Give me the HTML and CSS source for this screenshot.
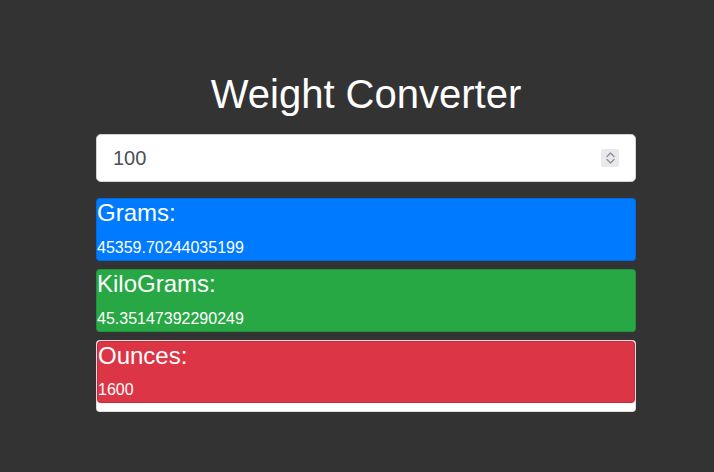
FILE: index.html
```html
<!DOCTYPE html>
<html lang="en">
<head>
<meta charset="utf-8">
<title>Weight Converter</title>
<link rel="stylesheet" href="styles.css">
</head>
<body>
<main class="converter">
  <h1 class="title">Weight Converter</h1>
  <div class="field">
    <input class="field-input" type="text" value="100" aria-label="Pounds">
    <span class="spinner" aria-hidden="true">
      <svg width="11" height="14" viewBox="0 0 11 14"><path d="M2 5.5 L5.5 2 L9 5.5 M2 8.5 L5.5 12 L9 8.5" fill="none" stroke="#8e8e96" stroke-width="1.4" stroke-linecap="round" stroke-linejoin="round"/></svg>
    </span>
  </div>
  <div class="output">
    <div class="card card-blue">
      <h4 class="card-label">Grams:</h4>
      <div class="card-value">45359.70244035199</div>
    </div>
    <div class="card card-green">
      <h4 class="card-label">KiloGrams:</h4>
      <div class="card-value">45.35147392290249</div>
    </div>
    <div class="card-outer">
      <div class="card card-red">
        <h4 class="card-label">Ounces:</h4>
        <div class="card-value">1600</div>
      </div>
    </div>
  </div>
</main>
</body>
</html>
```
FILE: styles.css
```css
* { box-sizing: border-box; }
html, body { margin: 0; padding: 0; }
body {
  background: #333333;
  font-family: "Liberation Sans", Arial, sans-serif;
  color: #fff;
  padding: 70px 0 0 18px;
  min-height: 472px;
}
.converter {
  width: 540px;
  margin: 0 auto;
}
.title {
  margin: 0 0 16px;
  font-size: 40px;
  font-weight: 400;
  line-height: 1.2;
  text-align: center;
  color: #fff;
}
.field {
  display: flex;
  align-items: center;
  height: 48px;
  background: #fff;
  border: 1px solid #ced4da;
  border-radius: 4.8px;
  padding: 0 16px 0 16px;
  margin-bottom: 16px;
}
.field-input {
  flex: 1;
  min-width: 0;
  border: none;
  outline: none;
  background: transparent;
  padding: 0;
  font-family: inherit;
  font-size: 20px;
  color: #495057;
}
.spinner {
  display: flex;
  align-items: center;
  justify-content: center;
  width: 18px;
  height: 18px;
  background: #e9e9ed;
  border-radius: 2px;
}
.output {
  display: flex;
  flex-direction: column;
  gap: 8px;
}
.card {
  border: 1px solid rgba(0, 0, 0, 0.125);
  border-radius: 4px;
  color: #fff;
}
.card-blue { background: #007bff; }
.card-green { background: #28a745; }
.card-red {
  background: #dc3545;
  margin-bottom: 8px;
}
.card-outer {
  background: #fff;
  border: 1px solid rgba(0, 0, 0, 0.125);
  border-radius: 4px;
}
.card-label {
  margin: 0 0 8px;
  font-size: 24px;
  font-weight: 400;
  line-height: 1.2;
}
.card-value {
  font-size: 16px;
  line-height: 24px;
}
```
